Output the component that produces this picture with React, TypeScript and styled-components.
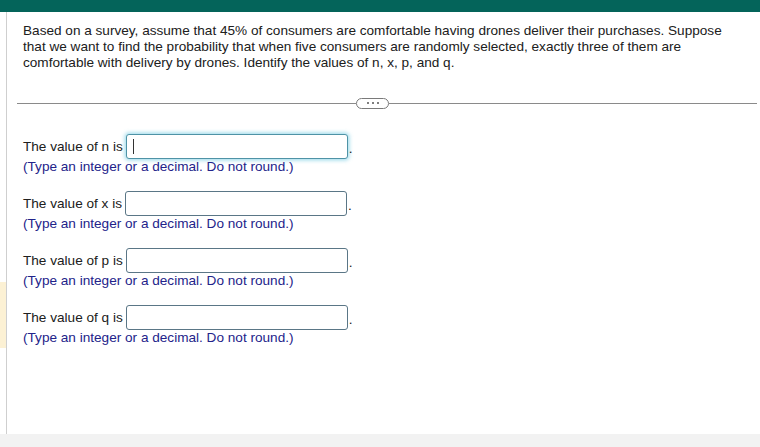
import React from "react";
import styled, { createGlobalStyle, css } from "styled-components";

const GlobalStyle = createGlobalStyle`
  html, body {
    margin: 0;
    padding: 0;
    background: #ffffff;
  }
  body {
    font-family: "Liberation Sans", Arial, sans-serif;
  }
`;

const Page = styled.div`
  display: flex;
  flex-direction: column;
  width: 760px;
  height: 447px;
  overflow: hidden;
`;

const TopBar = styled.div`
  height: 12px;
  background: #04645a;
  flex: none;
`;

const Main = styled.div`
  display: flex;
  flex: 1;
  min-height: 0;
`;

const Gutter = styled.div`
  width: 6px;
  flex: none;
  padding-top: 270px;
`;

const Marker = styled.div`
  width: 6px;
  height: 66px;
  background: #fcf1d4;
`;

const Content = styled.div`
  flex: 1;
  border-left: 1px solid #cfcfcf;
  padding: 11px 3px 0 16px;
`;

const bodyText = css`
  font-size: 13.6px;
  line-height: 16px;
  color: #202020;
`;

const Question = styled.p`
  ${bodyText}
  margin: 0;
  width: 712px;
`;

const DividerRow = styled.div`
  display: flex;
  align-items: center;
  margin: 26px 0 0 -6px;
  height: 12px;
`;

const Rule = styled.div<{ $grow?: boolean }>`
  height: 1px;
  background: #8a8a8a;
  flex: ${(p) => (p.$grow ? 1 : "none")};
  width: ${(p) => (p.$grow ? "auto" : "339px")};
`;

const Pill = styled.div`
  width: 31px;
  height: 9px;
  border: 1px solid #7a7a7a;
  border-radius: 6px;
  display: flex;
  align-items: center;
  justify-content: center;
  gap: 3px;
  background: #fff;
`;

const Dot = styled.span`
  width: 2px;
  height: 2px;
  border-radius: 50%;
  background: #555;
`;

const Answers = styled.div`
  display: flex;
  flex-direction: column;
  gap: 16px;
  margin-top: 25px;
`;

const Answer = styled.div`
  display: flex;
  flex-direction: column;
`;

const FieldRow = styled.div`
  display: flex;
  align-items: center;
  height: 25px;
`;

const Label = styled.span`
  ${bodyText}
  margin-right: 3px;
  white-space: nowrap;
`;

const Box = styled.div<{ $focused?: boolean }>`
  box-sizing: border-box;
  width: 222px;
  height: 25px;
  border: 1px solid ${(p) => (p.$focused ? "#4f93a6" : "#5a7686")};
  border-radius: 3px;
  background: #fff;
  display: flex;
  align-items: center;
  padding-left: 6px;
  ${(p) =>
    p.$focused &&
    css`
      box-shadow: 0 0 4px 1px rgba(110, 200, 225, 0.75);
    `}
`;

const Caret = styled.span`
  width: 1px;
  height: 15px;
  background: #333;
`;

const Period = styled.span`
  ${bodyText}
  margin-left: 1px;
  align-self: flex-end;
  line-height: 20px;
`;

const Hint = styled.div`
  font-size: 13.6px;
  line-height: 16px;
  color: #23238a;
`;

const Footer = styled.div`
  height: 13px;
  background: #f2f2f2;
  flex: none;
`;

const vars = ["n", "x", "p", "q"];

export default function App() {
  return (
    <>
      <GlobalStyle />
      <Page>
        <TopBar />
        <Main>
          <Gutter>
            <Marker />
          </Gutter>
          <Content>
            <Question>
              Based on a survey, assume that 45% of consumers are comfortable
              having drones deliver their purchases. Suppose that we want to
              find the probability that when five consumers are randomly
              selected, exactly three of them are comfortable with delivery by
              drones. Identify the values of n, x, p, and q.
            </Question>
            <DividerRow>
              <Rule />
              <Pill>
                <Dot />
                <Dot />
                <Dot />
              </Pill>
              <Rule $grow />
            </DividerRow>
            <Answers>
              {vars.map((v, i) => (
                <Answer key={v}>
                  <FieldRow>
                    <Label>The value of {v} is</Label>
                    <Box $focused={i === 0}>{i === 0 && <Caret />}</Box>
                    <Period>.</Period>
                  </FieldRow>
                  <Hint>(Type an integer or a decimal. Do not round.)</Hint>
                </Answer>
              ))}
            </Answers>
          </Content>
        </Main>
        <Footer />
      </Page>
    </>
  );
}
